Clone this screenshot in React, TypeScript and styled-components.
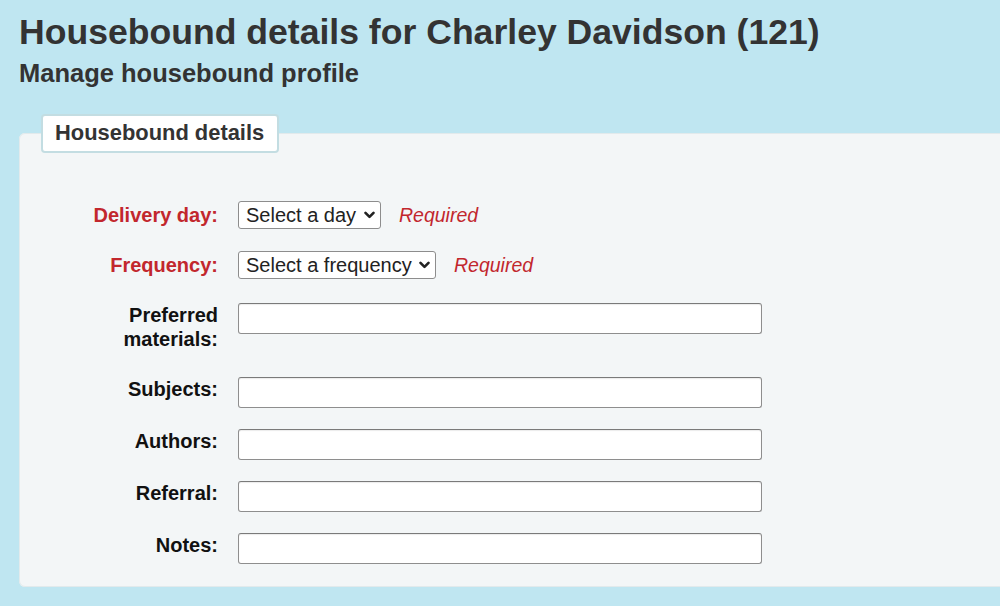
import React from 'react';
import styled, { createGlobalStyle } from 'styled-components';

const GlobalStyle = createGlobalStyle`
  html, body { margin: 0; padding: 0; }
  body {
    background: #bfe6f1;
    font-family: "Liberation Sans", Arial, Helvetica, sans-serif;
    color: #333;
    overflow: hidden;
  }
`;

const Page = styled.main`
  width: 1000px;
  height: 606px;
  box-sizing: border-box;
  padding: 11px 0 0 19px;
  overflow: hidden;
`;

const Title = styled.h1`
  margin: 0;
  font-size: 35.6px;
  line-height: 42px;
  font-weight: 700;
  color: #333;
`;

const Subtitle = styled.h2`
  margin: 5px 0 0;
  font-size: 25.5px;
  line-height: 30px;
  font-weight: 700;
  color: #333;
`;

const Panel = styled.fieldset`
  margin: 26px -40px 0 0;
  padding: 0 0 22px;
  border: 1px solid #e2eaec;
  border-radius: 6px;
  background: #f3f6f7;
  min-width: 0;
`;

const Legend = styled.legend`
  margin-left: 21px;
  padding: 6px 13px 7px 12px;
  background: #fff;
  border: 2px solid #c3dde2;
  border-radius: 4px;
  font-size: 21.9px;
  line-height: 22px;
  font-weight: 700;
  color: #333;
`;

const Rows = styled.ol`
  list-style: none;
  margin: 0;
  padding: 48px 0 0;
  display: flex;
  flex-direction: column;
`;

const Row = styled.li<{ $gap: number }>`
  display: flex;
  align-items: flex-start;
  margin-bottom: ${p => p.$gap}px;
  &:last-child { margin-bottom: 0; }
`;

const Label = styled.label<{ $required?: boolean; $top: number }>`
  flex: 0 0 198px;
  margin-right: 20px;
  padding-top: ${p => p.$top}px;
  text-align: right;
  font-size: 20px;
  line-height: 24px;
  font-weight: 700;
  color: ${p => (p.$required ? '#c2272d' : '#111')};
`;

const SelectWrap = styled.span`
  position: relative;
  display: inline-flex;
`;

const Select = styled.select<{ $width: number }>`
  appearance: none;
  -webkit-appearance: none;
  width: ${p => p.$width}px;
  height: 28px;
  box-sizing: border-box;
  padding: 0 22px 0 7px;
  border: 1px solid #8d8d8d;
  border-radius: 3px;
  background: #fff;
  font-family: "Liberation Sans", Arial, Helvetica, sans-serif;
  font-size: 20px;
  color: #222;
`;

const Chevron = styled.svg`
  position: absolute;
  right: 6px;
  top: 10px;
  width: 11px;
  height: 8px;
  pointer-events: none;
`;

const Required = styled.span`
  margin-left: 18px;
  padding-top: 3px;
  font-size: 19.5px;
  line-height: 22px;
  font-style: italic;
  color: #c2272d;
`;

const TextInput = styled.input`
  width: 524px;
  height: 31px;
  box-sizing: border-box;
  border: 1px solid #8e8e8e;
  border-top-color: #7a7a7a;
  border-radius: 3px;
  background: #fff;
  box-shadow: inset 0 1px 1px rgba(0, 0, 0, 0.08);
  font-family: "Liberation Sans", Arial, Helvetica, sans-serif;
  font-size: 18px;
`;

const DropDown: React.FC<{ width: number; placeholder: string; options: string[] }> = ({ width, placeholder, options }) => (
  <SelectWrap>
    <Select $width={width} defaultValue="">
      <option value="">{placeholder}</option>
      {options.map(o => (
        <option key={o} value={o}>{o}</option>
      ))}
    </Select>
    <Chevron viewBox="0 0 11 8">
      <path d="M1.5 1.8 L5.5 5.8 L9.5 1.8" fill="none" stroke="#222" strokeWidth="2.6" strokeLinecap="round" strokeLinejoin="round" />
    </Chevron>
  </SelectWrap>
);

const textFields: { label: React.ReactNode; gap: number }[] = [
  { label: <>Preferred<br />materials:</>, gap: 26 },
  { label: 'Subjects:', gap: 21 },
  { label: 'Authors:', gap: 21 },
  { label: 'Referral:', gap: 21 },
  { label: 'Notes:', gap: 0 },
];

export default function App() {
  return (
    <>
      <GlobalStyle />
      <Page>
        <Title>Housebound details for Charley Davidson (121)</Title>
        <Subtitle>Manage housebound profile</Subtitle>
        <Panel>
          <Legend>Housebound details</Legend>
          <Rows>
            <Row $gap={22}>
              <Label $required $top={2}>Delivery day:</Label>
              <DropDown width={143} placeholder="Select a day" options={['Monday', 'Tuesday', 'Wednesday', 'Thursday', 'Friday', 'Saturday', 'Sunday']} />
              <Required>Required</Required>
            </Row>
            <Row $gap={24}>
              <Label $required $top={2}>Frequency:</Label>
              <DropDown width={198} placeholder="Select a frequency" options={['Every week', 'Every other week', 'Every month']} />
              <Required>Required</Required>
            </Row>
            {textFields.map((f, i) => (
              <Row key={i} $gap={f.gap}>
                <Label $top={0}>{f.label}</Label>
                <TextInput type="text" />
              </Row>
            ))}
          </Rows>
        </Panel>
      </Page>
    </>
  );
}
